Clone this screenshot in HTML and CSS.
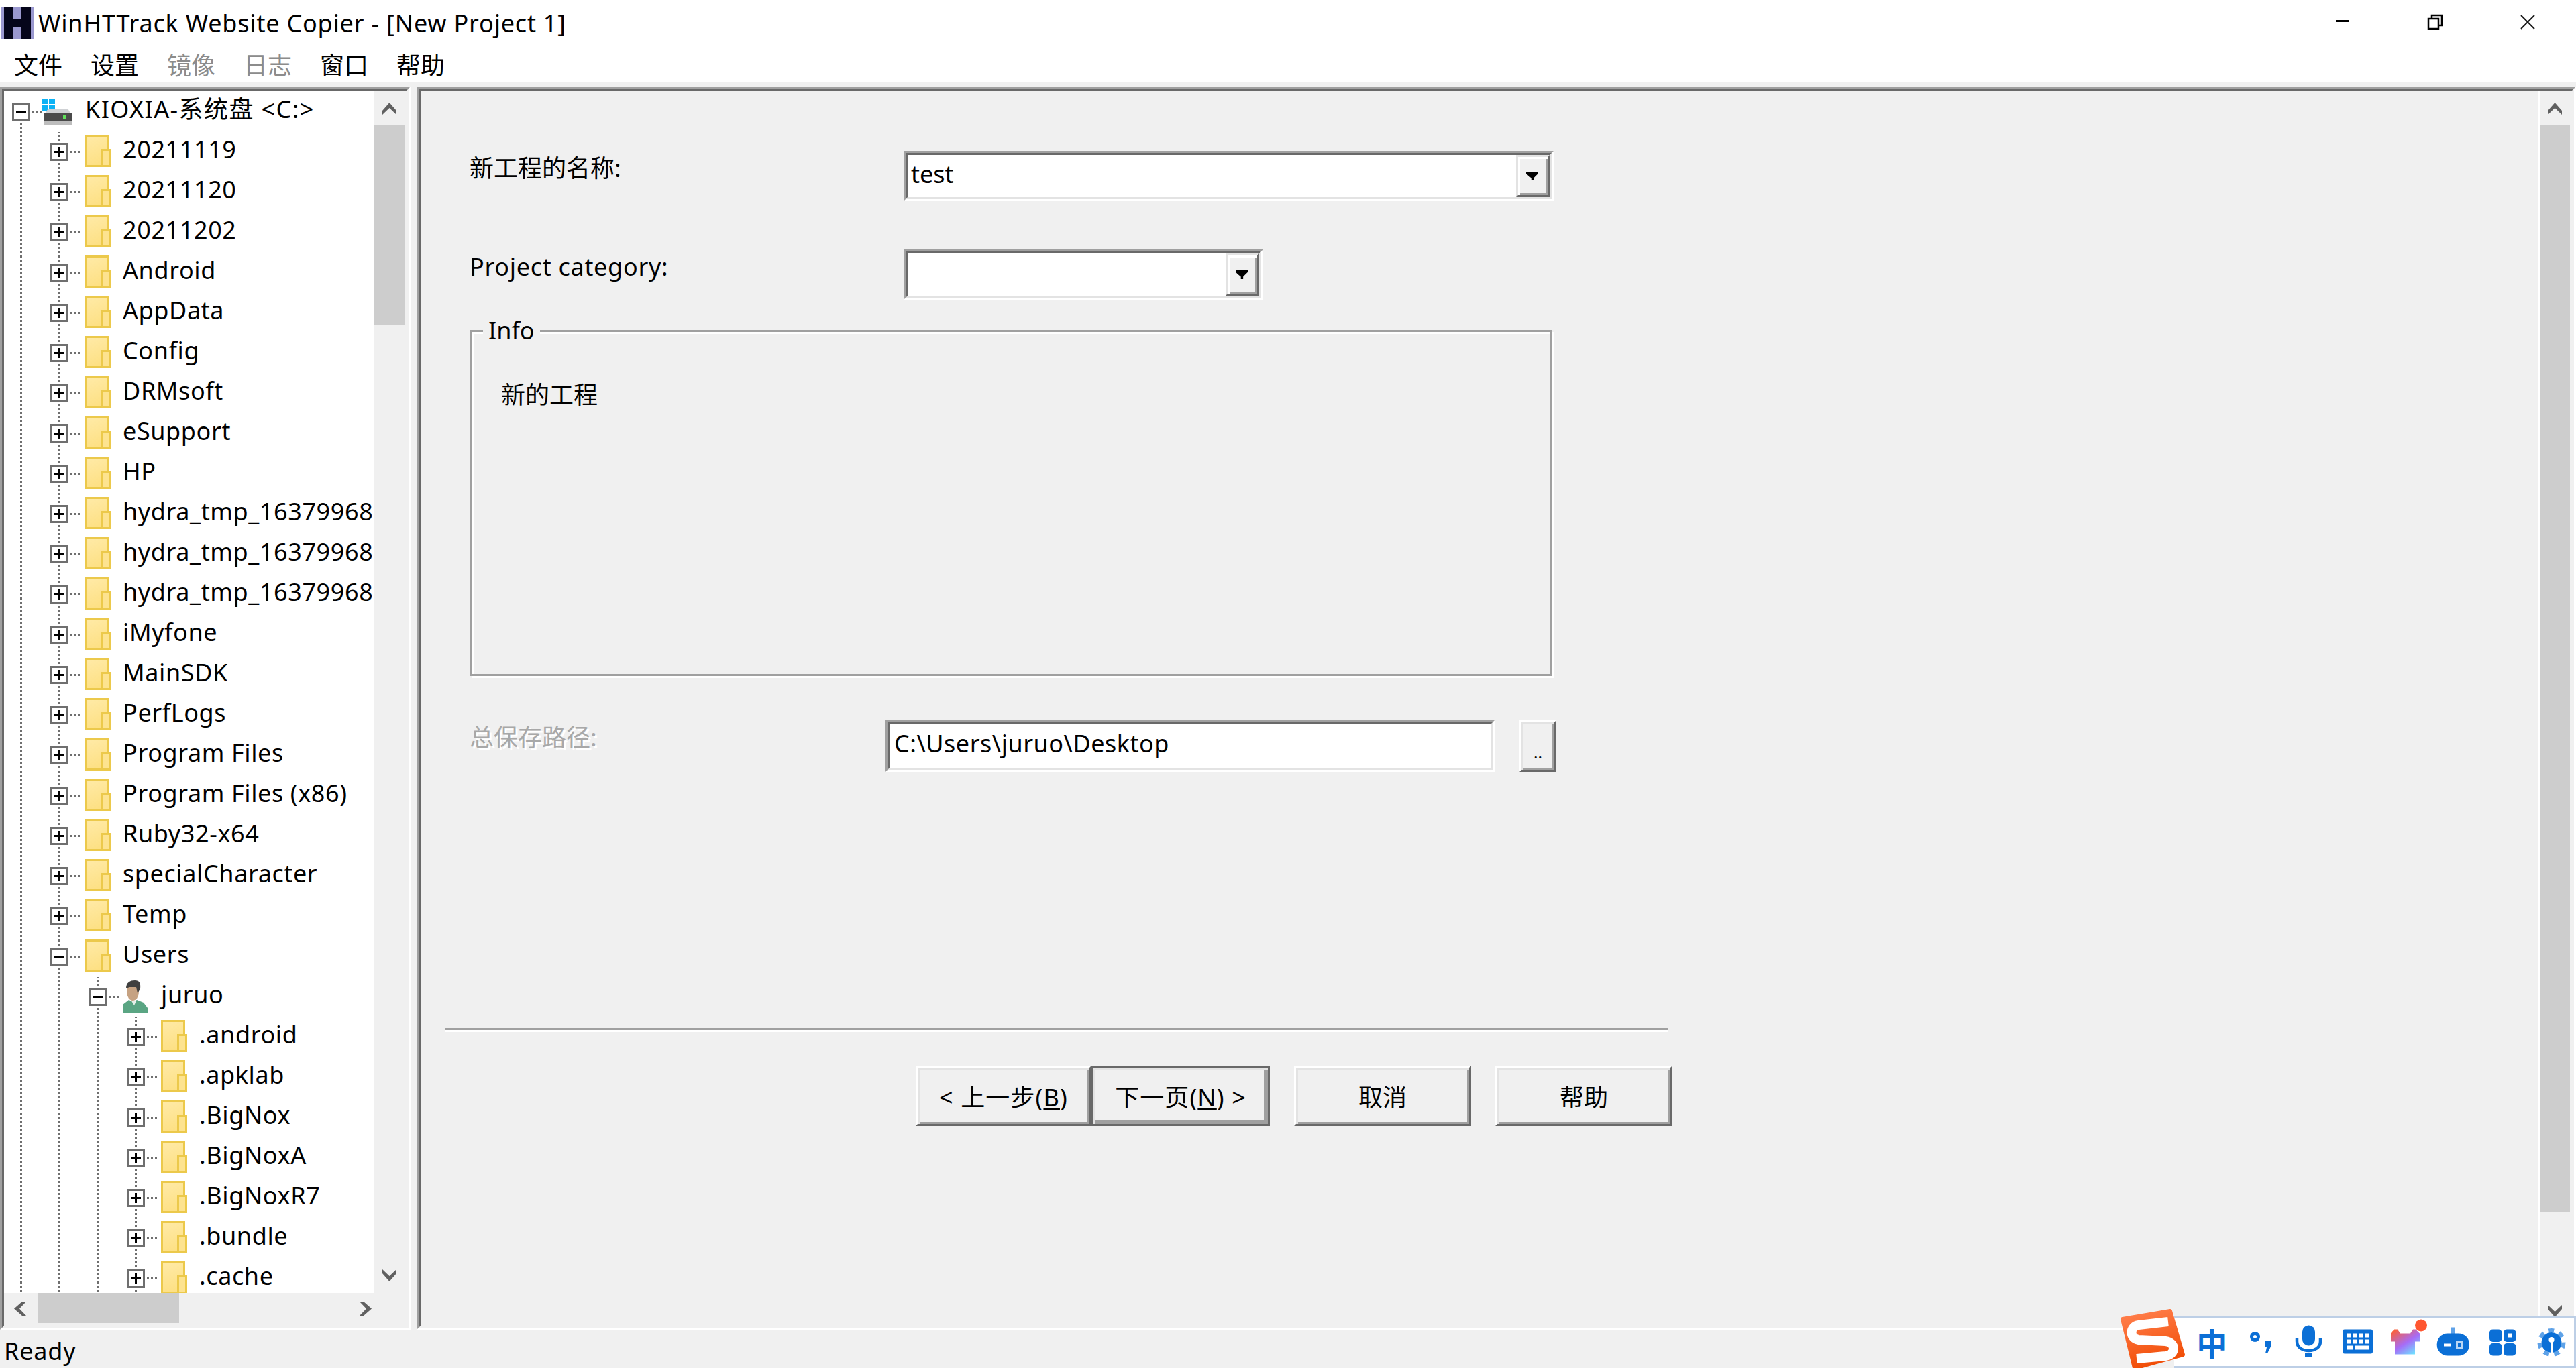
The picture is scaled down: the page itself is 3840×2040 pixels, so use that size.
FILE: index.html
```html
<!DOCTYPE html>
<html lang="zh-CN">
<head>
    <meta charset="UTF-8">
    <title>WinHTTrack Website Copier - [New Project 1]</title>
    <link rel="stylesheet" href="styles.css">
</head>
<body>
<svg class="defs" width="0" height="0">
    <symbol id="ar-up" viewBox="0 0 21 18"><path d="M10.5 0 21 12v6L10.5 8 0 18v-6z"/></symbol>
    <symbol id="ar-down" viewBox="0 0 21 18"><path d="M0 0 10.5 10 21 0v6L10.5 18 0 6z"/></symbol>
    <symbol id="ar-left" viewBox="0 0 18 21"><path d="M18 0 8 10.500 18 21h-6L0 10.500 12 0z"/></symbol>
    <symbol id="ar-right" viewBox="0 0 18 21"><path d="M0 0 10 10.500 0 21h6L18 10.500 6 0z"/></symbol>
    <symbol id="drop" viewBox="0 0 21 15"><path d="M0 0h21v3l-4 4-4 4v4H9v-4L4 7 0 3z"/></symbol>
    <linearGradient id="s-grad" x1="0.3" y1="0" x2="0.6" y2="1"><stop offset="0" stop-color="#ff7d4a"/><stop offset="1" stop-color="#f04a02"/></linearGradient>
    <linearGradient id="shirt-grad" x1="0.1" y1="0.05" x2="0.8" y2="1"><stop offset="0" stop-color="#fb5f38"/><stop offset="0.55" stop-color="#a66cf8"/><stop offset="1" stop-color="#6fe2ff"/></linearGradient>
</svg>

<div class="app">
    <div class="titlebar">
        <svg class="app-icon" width="48" height="48" viewBox="0 0 48 48">
            <rect width="48" height="48" fill="#9a98cf"/>
            <path d="M4 0h14v18h12V0h14v48H30V30H18v18H4z" fill="#05051a"/>
        </svg>
        <div class="title">WinHTTrack Website Copier - [New Project 1]</div>
        <div class="win-btns">
            <span class="win-btn"><svg width="24" height="24" viewBox="0 0 24 24"><path d="M2 10.500h20" stroke="#000" stroke-width="3"/></svg></span>
            <span class="win-btn"><svg width="24" height="24" viewBox="0 0 24 24" fill="none" stroke="#000" stroke-width="2.500"><rect x="2" y="7" width="15" height="15"/><path d="M7 7V2h15v15h-5"/></svg></span>
            <span class="win-btn"><svg width="24" height="24" viewBox="0 0 24 24"><path d="M2 2l20 20M22 2 2 22" stroke="#1a1a1a" stroke-width="2"/></svg></span>
        </div>
    </div>

    <div class="menubar">
        <span class="menu-item">文件</span>
        <span class="menu-item">设置</span>
        <span class="menu-item off">镜像</span>
        <span class="menu-item off">日志</span>
        <span class="menu-item">窗口</span>
        <span class="menu-item">帮助</span>
    </div>

    <div class="main">
        <div class="sunken left-pane">
            <div class="sunken-in left-grid">
                <div class="tree">
                    <div class="row root">
                        <span class="node"><span class="exp minus"></span></span><span class="link"></span>
                        <svg class="drive" width="45" height="39" viewBox="0 0 45 39">
                            <path d="M0 0h8v8H0zM10 0h9v8h-9zM0 10h8v8H0zM10 10h9v8h-9z" fill="#0db2f5"/>
                            <path d="M9 15h29l5 8H3z" fill="#cfd1d4"/>
                            <rect x="3" y="21" width="42" height="13" fill="#4a4a4a"/>
                            <rect x="3" y="34" width="42" height="5" fill="#bdbdbd"/>
                            <rect x="31" y="25" width="5" height="5" fill="#5fe05a"/>
                        </svg>
                        <span class="label root-label">KIOXIA-系统盘 &lt;C:&gt;</span>
                    </div>
                    <div class="row"><i class="guide"></i><span class="node"><span class="exp plus"></span></span><span class="link"></span><span class="folder"></span><span class="label">20211119</span></div>
                    <div class="row"><i class="guide"></i><span class="node"><span class="exp plus"></span></span><span class="link"></span><span class="folder"></span><span class="label">20211120</span></div>
                    <div class="row"><i class="guide"></i><span class="node"><span class="exp plus"></span></span><span class="link"></span><span class="folder"></span><span class="label">20211202</span></div>
                    <div class="row"><i class="guide"></i><span class="node"><span class="exp plus"></span></span><span class="link"></span><span class="folder"></span><span class="label">Android</span></div>
                    <div class="row"><i class="guide"></i><span class="node"><span class="exp plus"></span></span><span class="link"></span><span class="folder"></span><span class="label">AppData</span></div>
                    <div class="row"><i class="guide"></i><span class="node"><span class="exp plus"></span></span><span class="link"></span><span class="folder"></span><span class="label">Config</span></div>
                    <div class="row"><i class="guide"></i><span class="node"><span class="exp plus"></span></span><span class="link"></span><span class="folder"></span><span class="label">DRMsoft</span></div>
                    <div class="row"><i class="guide"></i><span class="node"><span class="exp plus"></span></span><span class="link"></span><span class="folder"></span><span class="label">eSupport</span></div>
                    <div class="row"><i class="guide"></i><span class="node"><span class="exp plus"></span></span><span class="link"></span><span class="folder"></span><span class="label">HP</span></div>
                    <div class="row"><i class="guide"></i><span class="node"><span class="exp plus"></span></span><span class="link"></span><span class="folder"></span><span class="label">hydra_tmp_163799682</span></div>
                    <div class="row"><i class="guide"></i><span class="node"><span class="exp plus"></span></span><span class="link"></span><span class="folder"></span><span class="label">hydra_tmp_163799682</span></div>
                    <div class="row"><i class="guide"></i><span class="node"><span class="exp plus"></span></span><span class="link"></span><span class="folder"></span><span class="label">hydra_tmp_163799682</span></div>
                    <div class="row"><i class="guide"></i><span class="node"><span class="exp plus"></span></span><span class="link"></span><span class="folder"></span><span class="label">iMyfone</span></div>
                    <div class="row"><i class="guide"></i><span class="node"><span class="exp plus"></span></span><span class="link"></span><span class="folder"></span><span class="label">MainSDK</span></div>
                    <div class="row"><i class="guide"></i><span class="node"><span class="exp plus"></span></span><span class="link"></span><span class="folder"></span><span class="label">PerfLogs</span></div>
                    <div class="row"><i class="guide"></i><span class="node"><span class="exp plus"></span></span><span class="link"></span><span class="folder"></span><span class="label">Program Files</span></div>
                    <div class="row"><i class="guide"></i><span class="node"><span class="exp plus"></span></span><span class="link"></span><span class="folder"></span><span class="label">Program Files (x86)</span></div>
                    <div class="row"><i class="guide"></i><span class="node"><span class="exp plus"></span></span><span class="link"></span><span class="folder"></span><span class="label">Ruby32-x64</span></div>
                    <div class="row"><i class="guide"></i><span class="node"><span class="exp plus"></span></span><span class="link"></span><span class="folder"></span><span class="label">specialCharacter</span></div>
                    <div class="row"><i class="guide"></i><span class="node"><span class="exp plus"></span></span><span class="link"></span><span class="folder"></span><span class="label">Temp</span></div>
                    <div class="row"><i class="guide"></i><span class="node"><span class="exp minus"></span></span><span class="link"></span><span class="folder"></span><span class="label">Users</span></div>
                    <div class="row"><i class="guide"></i><i class="guide"></i><span class="node"><span class="exp minus"></span></span><span class="link"></span>
                        <svg class="user" width="39" height="48" viewBox="0 0 39 48">
                            <path d="M0 48V36l9-7 7 3 5-3 10 4 6 8v7z" fill="#5aa583"/>
                            <path d="M12 29l5 8 3-6z" fill="#e6efe9"/>
                            <ellipse cx="15" cy="17" rx="9" ry="13" fill="#c6a282"/>
                            <path d="M5 12C5 3 11 0 18 0s9 4 8 13l-4 6-2-9H10z" fill="#3f3f3f"/>
                        </svg>
                        <span class="label">juruo</span>
                    </div>
                    <div class="row"><i class="guide"></i><i class="guide"></i><i class="guide"></i><span class="node"><span class="exp plus"></span></span><span class="link"></span><span class="folder"></span><span class="label">.android</span></div>
                    <div class="row"><i class="guide"></i><i class="guide"></i><i class="guide"></i><span class="node"><span class="exp plus"></span></span><span class="link"></span><span class="folder"></span><span class="label">.apklab</span></div>
                    <div class="row"><i class="guide"></i><i class="guide"></i><i class="guide"></i><span class="node"><span class="exp plus"></span></span><span class="link"></span><span class="folder"></span><span class="label">.BigNox</span></div>
                    <div class="row"><i class="guide"></i><i class="guide"></i><i class="guide"></i><span class="node"><span class="exp plus"></span></span><span class="link"></span><span class="folder"></span><span class="label">.BigNoxA</span></div>
                    <div class="row"><i class="guide"></i><i class="guide"></i><i class="guide"></i><span class="node"><span class="exp plus"></span></span><span class="link"></span><span class="folder"></span><span class="label">.BigNoxR7</span></div>
                    <div class="row"><i class="guide"></i><i class="guide"></i><i class="guide"></i><span class="node"><span class="exp plus"></span></span><span class="link"></span><span class="folder"></span><span class="label">.bundle</span></div>
                    <div class="row"><i class="guide"></i><i class="guide"></i><i class="guide"></i><span class="node"><span class="exp plus"></span></span><span class="link"></span><span class="folder"></span><span class="label">.cache</span></div>
                </div>
                <div class="vscroll">
                    <span class="sb-btn up"><svg class="arrow"><use href="#ar-up"/></svg></span>
                    <span class="thumb tree-thumb"></span>
                    <span class="sb-btn down"><svg class="arrow"><use href="#ar-down"/></svg></span>
                </div>
                <div class="hscroll">
                    <span class="sb-btn-h"><svg class="arrow-h"><use href="#ar-left"/></svg></span>
                    <span class="thumb-h"></span>
                    <span class="sb-btn-h end"><svg class="arrow-h"><use href="#ar-right"/></svg></span>
                </div>
            </div>
        </div>

        <div class="sunken right-pane">
            <div class="sunken-in right-flex">
                <div class="wizard">
                    <div class="field first">
                        <div class="field-label name-label">新工程的名称:</div>
                        <div class="combo name-combo">
                            <div class="combo-in">
                                <div class="combo-text">test</div>
                                <div class="combo-btn"><svg class="drop"><use href="#drop"/></svg></div>
                            </div>
                        </div>
                    </div>
                    <div class="field second">
                        <div class="field-label name-label latin">Project category:</div>
                        <div class="combo cat-combo">
                            <div class="combo-in">
                                <div class="combo-text"></div>
                                <div class="combo-btn"><svg class="drop"><use href="#drop"/></svg></div>
                            </div>
                        </div>
                    </div>
                    <div class="groupbox">
                        <div class="legend">Info</div>
                        <div class="group-text">新的工程</div>
                    </div>
                    <div class="field path-row">
                        <div class="field-label path-label disabled">总保存路径:</div>
                        <div class="combo path-input">
                            <div class="combo-in"><div class="combo-text path-text">C:\Users\juruo\Desktop</div></div>
                        </div>
                        <button class="btn dots">..</button>
                    </div>
                    <div class="sep"></div>
                    <div class="actions">
                        <button class="btn back">&lt; 上一步(<u>B</u>)</button>
                        <button class="btn next">下一页(<u>N</u>) &gt;</button>
                        <button class="btn cancel">取消</button>
                        <button class="btn help">帮助</button>
                    </div>
                </div>
                <div class="vscroll main-scroll">
                    <span class="sb-btn up"><svg class="arrow"><use href="#ar-up"/></svg></span>
                    <span class="thumb main-thumb"></span>
                    <span class="sb-btn down"><svg class="arrow"><use href="#ar-down"/></svg></span>
                </div>
            </div>
        </div>
    </div>

    <div class="statusbar">Ready</div>
</div>

<!-- input method toolbar, floats over the window -->
<div class="ime">
    <svg class="ime-logo" width="100" height="92" viewBox="0 0 100 92">
        <path d="M4 15 75 3 94 68 22 88z" fill="url(#s-grad)" stroke="url(#s-grad)" stroke-width="6" stroke-linejoin="round"/>
        <path d="M72 19 28 24C14 26 14 44 28 46l40 2c16 2 16 20 0 22l-43 4" fill="none" stroke="#fff" stroke-width="14"/>
    </svg>
    <span class="ime-cell ime-zh">中</span>
    <span class="ime-cell"><svg width="54" height="54" viewBox="0 0 54 54"><circle cx="18.500" cy="19.500" r="5" fill="none" stroke="#0b6fd6" stroke-width="5"/><path d="M33 26h9v8l-5 10h-3l2-9h-3z" fill="#0b6fd6"/></svg></span>
    <span class="ime-cell"><svg width="54" height="54" viewBox="0 0 54 54"><rect x="17" y="2.500" width="19" height="30" rx="9.500" fill="#0b6fd6"/><path d="M9 22v4c0 10 9 14 17.500 14S44 36 44 26v-4" fill="none" stroke="#0b6fd6" stroke-width="4.500"/><rect x="21" y="44" width="11" height="6" fill="#0b6fd6"/></svg></span>
    <span class="ime-cell"><svg width="54" height="54" viewBox="0 0 54 54"><rect x="5" y="8.500" width="45" height="36" rx="3" fill="#0b6fd6"/><path d="M11 14.500h6v6h-6zM20 14.500h6v6h-6zM29 14.500h6v6h-6zM38 14.500h6v6h-6zM11 23.500h6v6h-6zM20 23.500h6v6h-6zM29 23.500h6v6h-6zM38 23.500h6v6h-6zM11 32.500h9v6h-9zM23 32.500h21v6H23z" fill="#fff"/></svg></span>
    <span class="ime-cell"><svg class="over" width="54" height="54" viewBox="0 0 54 54"><path d="M4 14l5-5.500h5l4 6h15l4-6h4l6 6v12h-7v19H10v-19H4z" fill="url(#shirt-grad)"/><circle cx="49" cy="2.500" r="9" fill="#ff5630"/></svg></span>
    <span class="ime-cell"><svg width="54" height="54" viewBox="0 0 54 54"><rect x="22" y="5.500" width="6" height="10" fill="#5ea2e8"/><rect x="0.700" y="14.500" width="48.300" height="33" rx="16" fill="#0b6fd6"/><rect x="11" y="29.500" width="11" height="4" fill="#fff"/><rect x="29" y="26" width="11" height="11" fill="#b9d6f5"/><rect x="32" y="29" width="5" height="5" fill="#0b6fd6"/></svg></span>
    <span class="ime-cell"><svg width="54" height="54" viewBox="0 0 54 54"><rect x="6" y="8.500" width="18.500" height="18.500" rx="5" fill="#0b6fd6"/><rect x="27" y="8.500" width="18.500" height="18.500" rx="5" fill="#0b6fd6"/><rect x="6" y="29" width="18.500" height="18.500" rx="5" fill="#0b6fd6"/><rect x="27" y="29" width="18.500" height="18.500" rx="5" fill="#0b6fd6"/><rect x="33" y="14.500" width="6" height="6" fill="#fff"/></svg></span>
    <span class="ime-cell"><svg width="54" height="54" viewBox="0 0 54 54"><circle cx="26.500" cy="28" r="18" fill="none" stroke="#5ea2e8" stroke-width="6" stroke-dasharray="8 8"/><circle cx="26.500" cy="28" r="15" fill="#0b6fd6"/><circle cx="26.500" cy="24" r="4" fill="#fff"/><rect x="25" y="24" width="3" height="26" fill="#fff"/></svg></span>
</div>
</body>
</html>
```

FILE: styles.css
```css
* { box-sizing: border-box; }
html, body { margin: 0; padding: 0; }
body { width: 3840px; height: 2040px; overflow: hidden; background: #f0f0f0; color: #000; font-family: "Noto Sans", "Noto Sans CJK SC", sans-serif; font-size: 36px; }
.defs { position: absolute; }
.app { display: flex; flex-direction: column; height: 2040px; }

/* title + menu */
.titlebar { display: flex; height: 60px; background: #fff; flex: none; }
.app-icon { margin: 10px 0 0 2px; flex: none; }
.title { margin-left: 7px; line-height: 70px; letter-spacing: 0.8px; white-space: nowrap; }
.win-btns { margin-left: auto; padding-right: 3px; display: flex; }
.win-btn { width: 138px; height: 60px; padding-top: 21px; }
.win-btn svg { display: block; margin: 0 auto; }
.menubar { display: flex; height: 63px; background: #fff; flex: none; }
.menu-item { width: 114px; padding-left: 21px; line-height: 76px; white-space: nowrap; }
.menu-item.off { color: #8c8c8c; }

.main { display: flex; height: 1854px; margin-top: 6px; flex: none; }
.statusbar { flex: 1; padding-left: 6px; line-height: 64px; letter-spacing: 0.8px; }

/* double sunken edge used by panes and edits */
.sunken { border: 3px solid; border-color: #a0a0a0 #fff #fff #a0a0a0; }
.sunken-in { height: 100%; border: 3px solid; border-color: #696969 #f0f0f0 #f0f0f0 #696969; }
.left-pane { width: 612px; flex: none; margin-right: 9px; }
.right-pane { flex: 1; }
.left-grid { display: grid; grid-template-columns: 552px 48px; grid-template-rows: 1793px 49px; }
.right-flex { display: flex; }

/* tree */
.tree { background: #fff; padding: 2px 0 0 12px; overflow: hidden; }
.row { display: flex; height: 60px; white-space: nowrap; }
.guide, .node { background-image: linear-gradient(#6f6f6f 50%, transparent 50%); background-size: 3px 6px; background-position: 12px 4px; background-repeat: repeat-y; }
.guide { width: 57px; height: 60px; flex: none; }
.node { width: 27px; height: 60px; flex: none; padding-top: 16px; }
.root .node { background: none; }
.root .node::after { content: ""; display: block; width: 3px; height: 14px; margin: 3px 0 0 12px; background: linear-gradient(#6f6f6f 50%, transparent 50%) 0 0 / 3px 6px; }
.exp { display: block; position: relative; width: 27px; height: 27px; background: #fff; border: 3px solid #6f6f6f; }
.exp::before { content: ""; position: absolute; left: 3px; top: 9px; width: 15px; height: 3px; background: #000; }
.plus::after { content: ""; position: absolute; left: 9px; top: 3px; width: 3px; height: 15px; background: #000; }
.link { width: 15px; height: 3px; margin: 28px 6px 0 3px; flex: none; background: linear-gradient(90deg, #6f6f6f 50%, transparent 50%) 0 0 / 6px 3px; }
.root .link { margin-right: 0; }
.folder { position: relative; width: 36px; height: 48px; margin: 4px 21px 0 0; flex: none; border: 3px solid #ecc94b; background: linear-gradient(160deg, #ffeaa6, #fddf80); }
.folder::after { content: ""; position: absolute; right: -6px; bottom: -3px; width: 9px; height: 21px; border: 3px solid #ecc94b; border-bottom-width: 3px; background: #fde38f; }
.label { line-height: 52px; letter-spacing: 0.6px; }
.root-label { letter-spacing: 1.4px; }
.drive { margin: 10px 19px 0 0; flex: none; overflow: visible; }
.user { margin: 5px 18px 0 0; flex: none; }

/* scroll bars */
.vscroll { display: flex; flex-direction: column; background: #f0f0f0; }
.sb-btn { height: 51px; flex: none; display: flex; justify-content: center; padding-top: 18px; }
.sb-btn.down { margin-top: auto; padding-top: 16px; }
.arrow { width: 21px; height: 18px; fill: #606060; margin-right: 3px; }
.thumb { display: block; width: 45px; background: #cdcdcd; flex: none; }
.tree-thumb { height: 299px; }
.main-thumb { height: 1621px; }
.main-scroll { width: 51px; flex: none; border-left: 3px solid #fff; }
.main-scroll .sb-btn.down { height: 49px; padding-top: 18px; }
.hscroll { grid-column: 1 / 3; display: flex; background: #f0f0f0; height: 49px; }
.sb-btn-h { width: 51px; height: 45px; flex: none; padding: 13px 0 0 15px; }
.sb-btn-h.end { margin-left: 254px; }
.arrow-h { display: block; width: 18px; height: 21px; fill: #606060; }
.thumb-h { width: 210px; height: 45px; background: #cdcdcd; flex: none; }

/* wizard page */
.wizard { flex: 1; padding-left: 73px; min-width: 0; }
.field { display: flex; }
.field.first { margin-top: 90px; }
.field.second { margin-top: 72px; }
.field-label { line-height: 52px; white-space: nowrap; }
.name-label { width: 647px; flex: none; }
.latin { letter-spacing: 0.7px; }
.combo { height: 75px; flex: none; border: 3px solid; border-color: #a0a0a0 #fff #fff #a0a0a0; }
.combo-in { display: flex; height: 100%; background: #fff; border: 3px solid; border-color: #696969 #e3e3e3 #e3e3e3 #696969; }
.name-combo { width: 969px; }
.cat-combo { width: 536px; }
.combo-text { flex: 1; padding-left: 5px; line-height: 58px; }
.combo-btn { width: 50px; height: 63px; display: flex; justify-content: center; padding-top: 22px; background: #f0f0f0; border: 3px solid; border-color: #e3e3e3 #696969 #696969 #e3e3e3; box-shadow: inset 3px 3px 0 #fff, inset -3px -3px 0 #a0a0a0; }
.drop { width: 18px; height: 13px; fill: #000; margin-right: 2px; }

.groupbox { position: relative; width: 1613px; height: 516px; margin-top: 45px; border: 3px solid #a0a0a0; box-shadow: inset 3px 3px 0 #fff, 3px 3px 0 #fff; }
.legend { position: absolute; left: 17px; top: -28px; padding: 0 8px; background: #f0f0f0; line-height: 52px; height: 48px; }
.group-text { padding: 68px 0 0 44px; line-height: 52px; }

.path-row { margin-top: 66px; height: 77px; }
.path-label { width: 620px; flex: none; }
.disabled { color: #a8a8a8; text-shadow: 3px 3px 0 #fff; }
.path-input { width: 908px; height: 77px; }
.path-text { padding-left: 7px; line-height: 58px; letter-spacing: 0.5px; }

.btn { display: block; padding: 0; background: #f0f0f0; color: #000; font: inherit; border: 3px solid; border-color: #fff #696969 #696969 #fff; box-shadow: inset 3px 3px 0 #e3e3e3, inset -3px -3px 0 #a0a0a0; white-space: nowrap; }
.dots { width: 55px; height: 77px; margin-left: 37px; flex: none; font-size: 24px; line-height: 90px; }
.sep { width: 1823px; height: 6px; margin: 382px 0 0 -37px; border-top: 3px solid #a0a0a0; border-bottom: 3px solid #fff; }
.actions { display: flex; height: 90px; margin: 50px 0 0 665px; }
.actions .btn { height: 90px; flex: none; }
.back { width: 262px; letter-spacing: 1.1px; }
.next { width: 266px; letter-spacing: 1.1px; border-color: #696969; box-shadow: inset 3px 3px 0 #e3e3e3, inset -6px -6px 0 #a0a0a0; }
.cancel { width: 264px; margin-left: 36px; }
.help { width: 264px; margin-left: 36px; }

/* IME toolbar */
.ime { position: absolute; left: 3241px; top: 1962px; width: 599px; height: 78px; display: grid; grid-template-columns: repeat(8, 72.400px); padding-left: 20px; background: #fff; border: 3px solid #bdcfe6; border-left: 0; }
.ime-logo { position: absolute; left: -81px; top: -13px; overflow: visible; }
.ime-cell { display: flex; align-items: center; justify-content: center; height: 72px; }
.ime-cell svg { overflow: visible; flex: none; }
.ime-zh { color: #0b6fd6; font-size: 46px; font-weight: 700; }
```
